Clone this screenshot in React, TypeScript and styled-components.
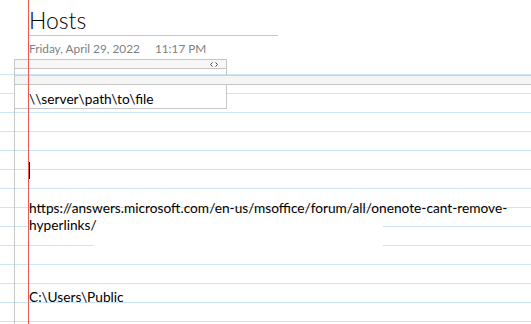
import styled, { createGlobalStyle } from "styled-components";

const GlobalStyle = createGlobalStyle`
  html, body {
    margin: 0;
    padding: 0;
    background: #fff;
  }
  body {
    font-family: Lato, "Open Sans", sans-serif;
    color: #000;
  }
`;

const Page = styled.div`
  position: relative;
  display: flex;
  flex-direction: column;
  width: 531px;
  height: 324px;
  overflow: hidden;
  background:
    linear-gradient(#fff, #fff) 0 0 / 100% 74px no-repeat,
    repeating-linear-gradient(to bottom, #c9e6f7 0 1px, transparent 1px 19px) 0 74px / 100% 100% no-repeat;

  &::after {
    content: "";
    position: absolute;
    top: 0;
    bottom: 0;
    left: 28px;
    width: 1px;
    background: #f05656;
  }
`;

const TitleBlock = styled.div`
  padding: 7px 0 0 29px;
`;

const Title = styled.h1`
  width: 249px;
  margin: 0;
  padding-bottom: 2px;
  border-bottom: 1px solid #c8c8c8;
  font-size: 23px;
  font-weight: 300;
  line-height: 26px;
`;

const Stamp = styled.div`
  margin-top: 5px;
  font-size: 11.8px;
  line-height: 16px;
  color: #808080;
  white-space: pre;
`;

const Outline = styled.div`
  flex: 1;
  display: flex;
  flex-direction: column;
  margin: 2px 0 0 14px;
  border-left: 1px solid #c6c6c6;
`;

const HandleRow = styled.div`
  display: flex;
  align-items: center;
  justify-content: flex-end;
  width: 203px;
  height: 8px;
  padding-right: 8px;
  border: 1px solid #c6c6c6;
  border-left: none;
  background: #f7f7f7;
`;

const BlankRow = styled.div`
  width: 211px;
  height: 6px;
  border-right: 1px solid #c6c6c6;
`;

const Band = styled.div`
  height: 8px;
  border-top: 1px solid #d2d2d2;
  border-bottom: 1px solid #c6c6c6;
  background: #f5f5f5;
`;

const Cell = styled.div`
  width: 197px;
  height: 19px;
  padding: 4px 0 0 14px;
  border-right: 1px solid #c6c6c6;
  border-bottom: 1px solid #c6c6c6;
  background: #fff;
  font-size: 13.7px;
  line-height: 19px;
  white-space: nowrap;
`;

const Para = styled.div<{ $gap: number }>`
  margin: ${(p) => p.$gap}px 0 0 14px;
  font-size: 13.7px;
  line-height: 17px;
`;

const Caret = styled.div`
  margin: 53px 0 0 14px;
  width: 1px;
  height: 17px;
  background: #000;
`;

const LinkBlock = styled(Para)`
  position: relative;
  isolation: isolate;
  width: 490px;

  &::before,
  &::after {
    content: "";
    position: absolute;
    z-index: -1;
    background: #fff;
  }
  &::before {
    top: 17px;
    left: 0;
    width: 354px;
    height: 20px;
  }
  &::after {
    top: 37px;
    left: 65px;
    width: 289px;
    height: 12px;
  }
`;

const Handle = () => (
  <svg width="8" height="5" viewBox="0 0 8 5">
    <path d="M2.5 0.5 L0.5 2.5 L2.5 4.5 M5.5 0.5 L7.5 2.5 L5.5 4.5" fill="none" stroke="#444" strokeWidth="1" />
  </svg>
);

export default function App() {
  return (
    <Page>
      <GlobalStyle />
      <TitleBlock>
        <Title>Hosts</Title>
        <Stamp>{"Friday, April 29, 2022     11:17 PM"}</Stamp>
      </TitleBlock>
      <Outline>
        <HandleRow>
          <Handle />
        </HandleRow>
        <BlankRow />
        <Band />
        <Cell>\\server\path\to\file</Cell>
        <Caret />
        <LinkBlock $gap={20}>
          https://answers.microsoft.com/en-us/msoffice/forum/all/onenote-cant-remove-
          <br />
          hyperlinks/
        </LinkBlock>
        <Para $gap={55}>C:\Users\Public</Para>
      </Outline>
    </Page>
  );
}
